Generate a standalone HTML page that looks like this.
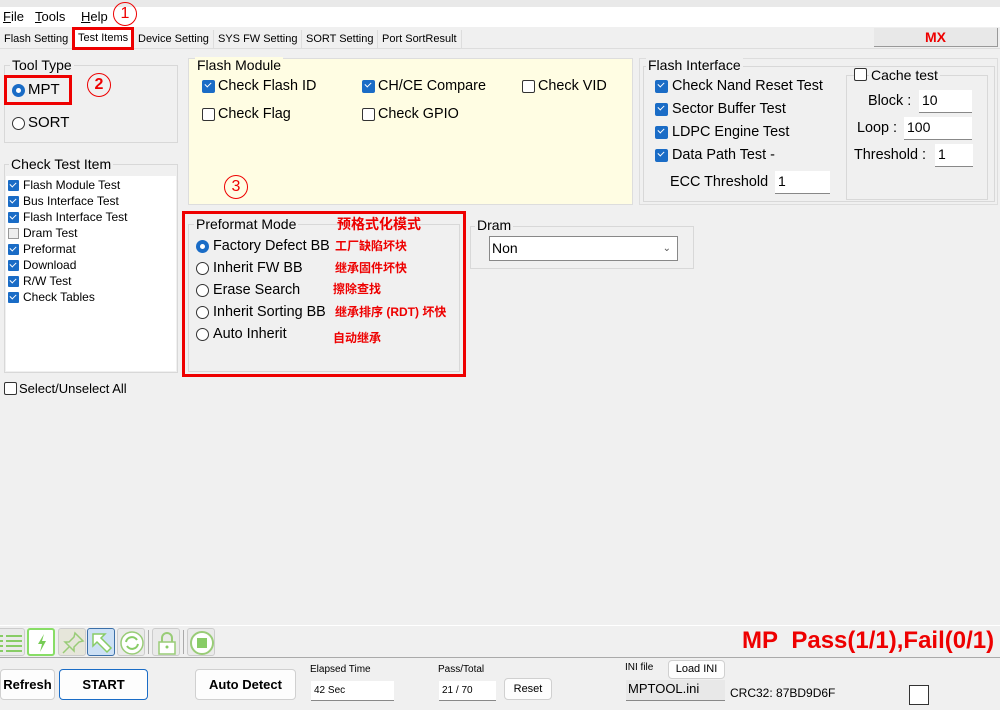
<!DOCTYPE html>
<html><head><meta charset="utf-8"><style>
*{box-sizing:border-box;margin:0;padding:0}
body{width:1000px;height:710px;background:#f0f0f0;font-family:"Liberation Sans","Noto Sans CJK SC",sans-serif;font-size:14px;color:#000;position:relative;overflow:hidden}
.a{position:absolute;white-space:nowrap}
.grp{position:absolute;border:1px solid #d8d8d8}
.lg{position:absolute;background:#f0f0f0;padding:0 2px;font-size:14px;line-height:16px}
.cb{position:absolute;width:13px;height:13px;border-radius:2px;background:#1a6cc6}
.cb::after{content:"";position:absolute;left:3px;top:2px;width:5px;height:3px;border-left:1.5px solid #fff;border-bottom:1.5px solid #fff;transform:rotate(-45deg)}
.cbe{position:absolute;width:13px;height:13px;border:1px solid #333;border-radius:2px;background:#fff}
.rb{position:absolute;width:13px;height:13px;border:1px solid #333;border-radius:50%;background:#fff}
.rbs{position:absolute;width:13px;height:13px;border-radius:50%;background:#1a6cc6}
.rbs::after{content:"";position:absolute;left:4px;top:4px;width:5px;height:5px;border-radius:50%;background:#fff}
.inp{position:absolute;background:#fff;border-bottom:1px solid #888;padding-left:3px;font-size:14px;line-height:20px}
.red{color:#e00;font-weight:bold}
.btn{position:absolute;background:#fdfdfd;border:1px solid #d0d0d0;border-radius:4px;text-align:center}
.tab{position:absolute;top:30px;height:18px;font-size:11px;line-height:18px;padding:0 4px;border-right:1px solid #ddd}
.sq{position:absolute;width:11px;height:11px;border-radius:1px;background:#1a6cc6}
.sq::after{content:"";position:absolute;left:2px;top:2px;width:5px;height:3px;border-left:1.4px solid #fff;border-bottom:1.4px solid #fff;transform:rotate(-45deg)}
.li{position:absolute;left:23px;font-size:12px}
.tb{position:absolute;top:628px;width:28px;height:28px;border:1px solid #ccc;border-radius:3px;background:#eaeaea}
.t{font-size:14.4px}
</style></head><body>
<div class="a" style="left:0;top:0;width:1000px;height:7px;background:#e9e9e9"></div>
<div class="a" style="left:0;top:7px;width:1000px;height:20px;background:#fff"></div>
<div class="a" style="left:3px;top:9px;font-size:13px"><u>F</u>ile</div>
<div class="a" style="left:35px;top:9px;font-size:13px"><u>T</u>ools</div>
<div class="a" style="left:81px;top:9px;font-size:13px"><u>H</u>elp</div>
<div class="a red" style="left:113px;top:2px;width:24px;height:24px;border:1.5px solid #e00;border-radius:50%;text-align:center;font-size:16px;line-height:21px;font-weight:normal">1</div>
<div class="a" style="left:0;top:48px;width:1000px;height:1px;background:#ddd"></div>
<div class="tab" style="left:0">Flash Setting</div>
<div class="tab" style="left:72px;top:27px;height:23px;border:3px solid #e00;background:#fff;line-height:17px;padding:0 3px">Test Items</div>
<div class="tab" style="left:134px">Device Setting</div>
<div class="tab" style="left:214px">SYS FW Setting</div>
<div class="tab" style="left:302px">SORT Setting</div>
<div class="tab" style="left:378px">Port SortResult</div>
<div class="a" style="left:874px;top:28px;width:124px;height:19px;background:#e8e8e8;border-bottom:1px solid #999;border-right:1px solid #999;text-align:center;line-height:19px;font-weight:bold;color:#e00">MX</div>

<div class="grp" style="left:4px;top:65px;width:174px;height:78px"></div>
<div class="lg" style="left:10px;top:57px">Tool Type</div>
<div class="a" style="left:4px;top:75px;width:68px;height:30px;border:3px solid #e00"></div>
<div class="rbs" style="left:12px;top:84px"></div>
<div class="a" style="left:28px;top:81px;font-size:15px">MPT</div>
<div class="a red" style="left:87px;top:73px;width:24px;height:24px;border:1.5px solid #e00;border-radius:50%;text-align:center;font-size:16px;line-height:21px">2</div>
<div class="rb" style="left:12px;top:117px"></div>
<div class="a" style="left:28px;top:114px;font-size:15px">SORT</div>

<div class="grp" style="left:4px;top:164px;width:174px;height:209px"></div>
<div class="lg" style="left:9px;top:156px">Check Test Item</div>
<div class="a" style="left:6px;top:176px;width:170px;height:195px;background:#fff"></div>
<div class="sq" style="left:8px;top:180px"></div><div class="li" style="top:178px">Flash Module Test</div>
<div class="sq" style="left:8px;top:196px"></div><div class="li" style="top:194px">Bus Interface Test</div>
<div class="sq" style="left:8px;top:212px"></div><div class="li" style="top:210px">Flash Interface Test</div>
<div class="a" style="left:8px;top:228px;width:11px;height:11px;border:1px solid #999;background:#eee"></div><div class="li" style="top:226px">Dram Test</div>
<div class="sq" style="left:8px;top:244px"></div><div class="li" style="top:242px">Preformat</div>
<div class="sq" style="left:8px;top:260px"></div><div class="li" style="top:258px">Download</div>
<div class="sq" style="left:8px;top:276px"></div><div class="li" style="top:274px">R/W Test</div>
<div class="sq" style="left:8px;top:292px"></div><div class="li" style="top:290px">Check Tables</div>
<div class="cbe" style="left:4px;top:382px"></div>
<div class="a" style="left:19px;top:381px;font-size:13px">Select/Unselect All</div>

<div class="a" style="left:188px;top:58px;width:445px;height:147px;background:#fffde3;border:1px solid #ddd"></div>
<div class="lg" style="left:195px;top:57px;background:#fffde3">Flash Module</div>
<div class="cb" style="left:202px;top:80px"></div><div class="a t" style="left:218px;top:78px">Check Flash ID</div>
<div class="cb" style="left:362px;top:80px"></div><div class="a t" style="left:378px;top:78px">CH/CE Compare</div>
<div class="cbe" style="left:522px;top:80px"></div><div class="a t" style="left:538px;top:78px">Check VID</div>
<div class="cbe" style="left:202px;top:108px"></div><div class="a t" style="left:218px;top:106px">Check Flag</div>
<div class="cbe" style="left:362px;top:108px"></div><div class="a t" style="left:378px;top:106px">Check GPIO</div>
<div class="a red" style="left:224px;top:175px;width:24px;height:24px;border:1.5px solid #e00;border-radius:50%;text-align:center;font-size:16px;line-height:21px;font-weight:normal">3</div>

<div class="a" style="left:639px;top:58px;width:359px;height:147px;border:1px solid #ddd"></div>
<div class="grp" style="left:643px;top:66px;width:352px;height:136px"></div>
<div class="lg" style="left:646px;top:57px">Flash Interface</div>
<div class="cb" style="left:655px;top:80px"></div><div class="a t" style="left:672px;top:78px">Check Nand Reset Test</div>
<div class="cb" style="left:655px;top:103px"></div><div class="a t" style="left:672px;top:101px">Sector Buffer Test</div>
<div class="cb" style="left:655px;top:126px"></div><div class="a t" style="left:672px;top:124px">LDPC Engine Test</div>
<div class="cb" style="left:655px;top:149px"></div><div class="a t" style="left:672px;top:147px">Data Path Test -</div>
<div class="a t" style="left:670px;top:174px">ECC Threshold</div>
<div class="inp" style="left:775px;top:171px;width:55px;height:23px">1</div>
<div class="grp" style="left:846px;top:75px;width:142px;height:125px"></div>
<div class="cbe" style="left:854px;top:68px"></div><div class="lg" style="left:869px;top:67px">Cache test</div>
<div class="a t" style="left:868px;top:93px">Block :</div><div class="inp" style="left:919px;top:90px;width:53px;height:23px">10</div>
<div class="a t" style="left:857px;top:120px">Loop :</div><div class="inp" style="left:904px;top:117px;width:68px;height:23px">100</div>
<div class="a t" style="left:854px;top:147px">Threshold :</div><div class="inp" style="left:935px;top:144px;width:38px;height:23px">1</div>

<div class="a" style="left:182px;top:211px;width:284px;height:166px;border:3px solid #e00"></div>
<div class="grp" style="left:188px;top:224px;width:272px;height:148px"></div>
<div class="lg" style="left:194px;top:216px">Preformat Mode</div>
<div class="a red" style="left:337px;top:214px;font-size:14px">预格式化模式</div>
<div class="rbs" style="left:196px;top:240px"></div><div class="a t" style="left:213px;top:238px">Factory Defect BB</div>
<div class="a red" style="left:335px;top:237px;font-size:12px">工厂缺陷坏块</div>
<div class="rb" style="left:196px;top:262px"></div><div class="a t" style="left:213px;top:260px">Inherit FW BB</div>
<div class="a red" style="left:335px;top:259px;font-size:12px">继承固件坏快</div>
<div class="rb" style="left:196px;top:284px"></div><div class="a t" style="left:213px;top:282px">Erase Search</div>
<div class="a red" style="left:333px;top:280px;font-size:12px">擦除查找</div>
<div class="rb" style="left:196px;top:306px"></div><div class="a t" style="left:213px;top:304px">Inherit Sorting BB</div>
<div class="a red" style="left:335px;top:303px;font-size:12px">继承排序 (RDT) 坏快</div>
<div class="rb" style="left:196px;top:328px"></div><div class="a t" style="left:213px;top:326px">Auto Inherit</div>
<div class="a red" style="left:333px;top:329px;font-size:12px">自动继承</div>

<div class="grp" style="left:470px;top:226px;width:224px;height:43px"></div>
<div class="lg" style="left:475px;top:217px">Dram</div>
<div class="a" style="left:489px;top:236px;width:189px;height:25px;background:#fff;border:1px solid #888;padding-left:2px;line-height:23px">Non<span style="position:absolute;right:6px;top:0;font-size:10px;color:#555">&#8964;</span></div>

<div class="a" style="left:0;top:625px;width:1000px;height:1px;background:#fff"></div>
<div class="tb" style="left:-4px;width:29px"><svg width="28" height="28"><g stroke="#8c6" stroke-width="2"><line x1="9" y1="7" x2="25" y2="7"/><line x1="9" y1="12" x2="25" y2="12"/><line x1="9" y1="17" x2="25" y2="17"/><line x1="9" y1="22" x2="25" y2="22"/><line x1="3" y1="7" x2="6" y2="7"/><line x1="3" y1="12" x2="6" y2="12"/><line x1="3" y1="17" x2="6" y2="17"/><line x1="3" y1="22" x2="6" y2="22"/></g></svg></div>
<div class="tb" style="left:27px;border:2px solid #8d6;background:#fff"><svg width="26" height="26"><path d="M15 4 L9 14 L13 14 L11 22 L17 11 L13 11 Z" fill="#7c5"/></svg></div>
<div class="tb" style="left:58px;background:#e6e6da"><svg width="28" height="28"><path d="M16 4 L24 12 L20 13 L15 18 L15 22 L6 13 L10 13 L15 8 Z M10 18 L4 24" stroke="#9c7" fill="none" stroke-width="1.5"/></svg></div>
<div class="tb" style="left:87px;background:#cce0f5;border-color:#3b6fa8"><svg width="28" height="28"><path d="M5 5 L17 5 L13 9 L23 19 L19 23 L9 13 L5 17 Z" stroke="#8c6" fill="#fff" stroke-width="1.5"/></svg></div>
<div class="tb" style="left:117px"><svg width="28" height="28"><circle cx="14" cy="14" r="11" stroke="#9c7" fill="#fff" stroke-width="1.5"/><path d="M8 13 A6 6 0 0 1 19 11 M20 15 A6 6 0 0 1 9 17" stroke="#8c6" fill="none" stroke-width="2"/></svg></div>
<div class="a" style="left:148px;top:630px;width:1px;height:24px;background:#aaa"></div>
<div class="tb" style="left:152px"><svg width="28" height="28"><path d="M9 13 V9 A5 5 0 0 1 19 9 V13" stroke="#9c7" fill="none" stroke-width="2"/><rect x="6" y="13" width="16" height="12" fill="#fff" stroke="#9c7" stroke-width="1.5"/><circle cx="14" cy="18" r="1.5" fill="#8c6"/></svg></div>
<div class="a" style="left:183px;top:630px;width:1px;height:24px;background:#aaa"></div>
<div class="tb" style="left:187px"><svg width="28" height="28"><circle cx="14" cy="14" r="11" stroke="#9c7" fill="#fff" stroke-width="2"/><rect x="9" y="9" width="10" height="10" fill="#8c6"/></svg></div>
<div class="a red" style="left:742px;top:627px;font-size:24px">MP&nbsp; Pass(1/1),Fail(0/1)</div>
<div class="a" style="left:0;top:657px;width:1000px;height:1px;background:#aaa"></div>

<div class="btn" style="left:0;top:669px;width:55px;height:31px;font-weight:bold;line-height:29px;font-size:13px">Refresh</div>
<div class="btn" style="left:59px;top:669px;width:89px;height:31px;border-color:#1a6cc6;font-weight:bold;line-height:29px;font-size:13px">START</div>
<div class="btn" style="left:195px;top:669px;width:101px;height:31px;font-weight:bold;line-height:29px;font-size:13px">Auto Detect</div>
<div class="a" style="left:310px;top:664px;font-size:10px">Elapsed Time</div>
<div class="inp" style="left:311px;top:681px;width:83px;height:20px;font-size:10px">42 Sec</div>
<div class="a" style="left:438px;top:664px;font-size:10px">Pass/Total</div>
<div class="inp" style="left:439px;top:681px;width:57px;height:20px;font-size:10px">21 / 70</div>
<div class="btn" style="left:504px;top:678px;width:48px;height:22px;font-size:11px;line-height:20px">Reset</div>
<div class="a" style="left:625px;top:662px;font-size:10px">INI file</div>
<div class="btn" style="left:668px;top:660px;width:57px;height:19px;font-size:11px;line-height:17px">Load INI</div>
<div class="a" style="left:626px;top:680px;width:99px;height:21px;background:#e8e8e8;border-bottom:1px solid #888;padding-left:2px;font-size:13px;line-height:18px">MPTOOL.ini</div>
<div class="a" style="left:730px;top:686px;font-size:12px">CRC32: 87BD9D6F</div>
<div class="a" style="left:909px;top:685px;width:20px;height:20px;background:#fff;border:1px solid #333"></div>
</body></html>
